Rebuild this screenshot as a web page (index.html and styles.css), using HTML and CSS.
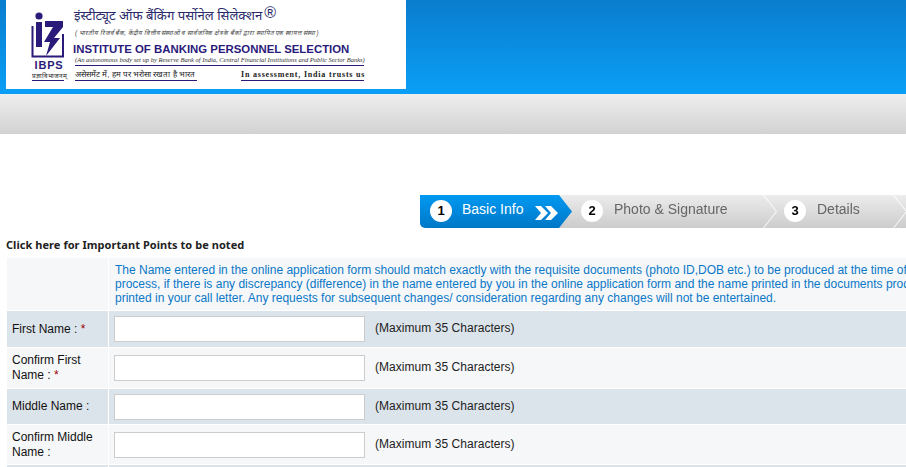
FILE: index.html
```html
<!doctype html>
<html lang="en">
<head>
    <meta charset="UTF-8">
    <meta name="viewport" content="width=device-width, initial-scale=1.0">
    <title>IBPS Application Form</title>
    <link rel="stylesheet" href="styles.css">
</head>
<body>
    <div class="header">
        <div class="logo">
            <svg class="emblem" viewBox="0 0 36 46" width="36" height="46">
                <circle cx="8" cy="4" r="3.6" fill="#2a1a7a"/>
                <path d="M5 10h6v25H5z" fill="#2a1a7a"/>
                <path d="M14 9h18v6L23 26h6L15 44l4-14h-6l9-15h-8z" fill="#2a1a7a"/>
                <path d="M1.500 14v30.500H32V22" fill="none" stroke="#2a1a7a" stroke-width="2"/>
            </svg>
            <div class="logo-text">
                <div class="hindi-title">इंस्टीट्यूट ऑफ बैंकिंग पर्सोनेल सिलेक्शन<sup>®</sup></div>
                <div class="hindi-sub">( भारतीय रिजर्व बैंक, केंद्रीय वित्तीय संस्थाओं व सार्वजनिक क्षेत्र के बैंकों द्वारा स्थापित एक स्वायत्त संस्था )</div>
                <div class="eng-title">INSTITUTE OF BANKING PERSONNEL SELECTION</div>
                <div class="eng-sub">(An autonomous body set up by Reserve Bank of India, Central Financial Institutions and Public Sector Banks)</div>
                <div class="mottos">
                    <span class="motto-hi">असेसमेंट में, हम पर भरोसा रखता है भारत</span>
                    <span class="motto-en">In assessment, India trusts us</span>
                </div>
            </div>
            <div class="ibps">IBPS</div>
            <div class="ibps-hi">प्रज्ञाविभाजनम्</div>
        </div>
    </div>
    <div class="band"></div>

    <ul class="steps">
        <li class="step step-active">
            <div class="step-inner">
                <span class="num">1</span>Basic Info
                <svg class="arrows" viewBox="0 0 23 14" width="23" height="14">
                    <path d="M0 0h6l7 7-7 7H0l6-7zM10 0h6l7 7-7 7h-6l6-7z" fill="#fff"/>
                </svg>
            </div>
        </li>
        <li class="step step-photo">
            <div class="step-inner"><span class="num">2</span>Photo &amp; Signature</div>
        </li>
        <li class="step step-details">
            <div class="step-inner"><span class="num">3</span>Details</div>
        </li>
        <li class="step step-last">
            <div class="step-inner"></div>
        </li>
    </ul>

    <div class="points">Click here for Important Points to be noted</div>

    <table class="form-table">
        <tr class="row-light">
            <td class="label"></td>
            <td class="note">The Name entered in the online application form should match exactly with the requisite documents (photo ID,DOB etc.) to be produced at the time of interview<br>process, if there is any discrepancy (difference) in the name entered by you in the online application form and the name printed in the documents produced<br>printed in your call letter. Any requests for subsequent changes/ consideration regarding any changes will not be entertained.</td>
        </tr>
        <tr class="row-dark row-first">
            <td class="label">First Name : <span class="req">*</span></td>
            <td class="field"><input type="text"><span class="hint">(Maximum 35 Characters)</span></td>
        </tr>
        <tr class="row-light row-confirm-first">
            <td class="label">Confirm First Name : <span class="req">*</span></td>
            <td class="field"><input type="text"><span class="hint">(Maximum 35 Characters)</span></td>
        </tr>
        <tr class="row-dark row-middle">
            <td class="label">Middle Name :</td>
            <td class="field"><input type="text"><span class="hint">(Maximum 35 Characters)</span></td>
        </tr>
        <tr class="row-light row-confirm">
            <td class="label">Confirm Middle Name :</td>
            <td class="field"><input type="text"><span class="hint">(Maximum 35 Characters)</span></td>
        </tr>
        <tr class="row-dark row-middle">
            <td class="label"></td>
            <td class="field"></td>
        </tr>
    </table>
</body>
</html>
```

FILE: styles.css
```css
html, body {
    margin: 0;
    padding: 0;
    height: 467px;
    overflow: hidden;
    background: #fff;
}
body {
    font-family: "Liberation Sans", Arial, sans-serif;
    font-size: 12px;
    width: 906px;
}
.header {
    height: 94px;
    background: linear-gradient(to bottom, #0a7dce, #0a9ff6);
}
.logo {
    position: relative;
    width: 400px;
    height: 89px;
    margin-left: 6px;
    background: #fff;
    display: flex;
    color: #2a1a7a;
}
.emblem {
    margin: 12px 0 0 25px;
    flex: none;
}
.ibps {
    position: absolute;
    left: 25px;
    top: 59px;
    width: 36px;
    text-align: center;
    font-size: 11px;
    line-height: 12px;
    font-weight: bold;
    letter-spacing: 0.8px;
}
.ibps-hi {
    position: absolute;
    left: 26px;
    top: 71px;
    width: 32px;
    font-size: 6.3px;
    line-height: 9px;
    text-align: center;
    white-space: nowrap;
    color: #222;
    border-bottom: 1px solid #2a1a7a;
}
.logo-text {
    margin-left: 6px;
    width: 291px;
    white-space: nowrap;
}
.hindi-title {
    margin: 7px 0 0 1px;
    height: 18px;
    font-size: 13.15px;
    line-height: 16px;
    font-family: "Noto Sans", "Liberation Sans", sans-serif;
    color: #2a2a6a;
}
.hindi-title sup {
    font-family: "Liberation Sans", sans-serif;
    font-size: 16px;
    line-height: 0;
    vertical-align: 2px;
    margin-left: 2px;
}
.hindi-sub {
    margin: 3px 0 0 2px;
    font-size: 6.3px;
    line-height: 10px;
    font-style: italic;
    color: #444;
}
.eng-title {
    margin-top: 4px;
    font-size: 11.4px;
    line-height: 14px;
    font-weight: bold;
    color: #2a1a7a;
}
.eng-sub {
    font-family: "Liberation Serif", serif;
    font-style: italic;
    font-size: 6.5px;
    line-height: 9px;
    margin: -1px 0 0 2px;
    padding-bottom: 1px;
    color: #333;
    border-bottom: 1px solid #2a1a7a;
}
.mottos {
    display: flex;
    justify-content: space-between;
    margin: 3px 0 0 2px;
}
.motto-hi {
    width: 122px;
    font-size: 8px;
    line-height: 11px;
    border-bottom: 1px solid #2a1a7a;
    color: #222;
}
.motto-en {
    width: 123px;
    font-family: "Liberation Serif", serif;
    font-weight: bold;
    font-size: 8px;
    line-height: 11px;
    letter-spacing: 0.8px;
    border-bottom: 1px solid #2a1a7a;
    color: #222;
}
.band {
    height: 40px;
    background: linear-gradient(to bottom, #eeeeee, #d2d2d2);
}
.steps {
    list-style: none;
    display: flex;
    margin: 61px 0 0 420px;
    padding: 0;
    height: 33px;
}
.step {
    flex: none;
    margin-left: -13px;
    filter: drop-shadow(1px 0 0 #fff);
}
.step-active {
    margin-left: 0;
    width: 152px;
    z-index: 4;
    filter: none;
}
.step-photo {
    width: 217px;
    z-index: 3;
}
.step-details {
    width: 143px;
    z-index: 2;
}
.step-last {
    width: 120px;
    z-index: 1;
}
.step-inner {
    box-sizing: border-box;
    height: 33px;
    display: flex;
    align-items: center;
    padding: 0 0 5px 22px;
    font-size: 14px;
    color: #666;
    background: linear-gradient(to bottom, #ececec, #cccccc);
    clip-path: polygon(0 0, calc(100% - 13px) 0, 100% 50%, calc(100% - 13px) 100%, 0 100%);
}
.step-details .step-inner {
    padding-left: 21px;
}
.step-active .step-inner {
    padding-left: 10px;
    color: #fff;
    background: linear-gradient(to bottom, #0099f2, #0077c6);
    border-radius: 0 0 0 5px;
}
.num {
    width: 22px;
    height: 22px;
    margin: 3px 11px 0 0;
    border-radius: 50%;
    background: #fff;
    color: #000;
    font-size: 13px;
    font-weight: bold;
    line-height: 22px;
    text-align: center;
}
.step-active .num {
    margin-right: 10px;
}
.arrows {
    flex: none;
    margin: 8px 0 0 12px;
}
.points {
    margin: 10px 0 0 6px;
    height: 19px;
    line-height: 13px;
    font-family: "Noto Sans", sans-serif;
    font-size: 11px;
    font-weight: bold;
    color: #222;
    letter-spacing: 0.05px;
}
.form-table {
    margin-left: 6px;
    border-collapse: separate;
    border-spacing: 1px;
    table-layout: fixed;
    width: 1100px;
}
.form-table td {
    padding: 0;
    vertical-align: middle;
}
.form-table .label {
    width: 91px;
    padding: 0 5px;
    color: #111;
    line-height: 15px;
}
.note {
    padding: 3px 0 4px 6px !important;
    color: #0a78c8;
    line-height: 14px;
    white-space: nowrap;
    height: 45px;
}
.row-light td {
    background: #f6f7f8;
}
.row-dark td {
    background: #dce4eb;
}
.row-first td {
    height: 36px;
}
.row-confirm-first td {
    height: 40px;
}
.row-confirm td {
    height: 39px;
}
.row-middle td {
    height: 35px;
}
.field {
    padding-left: 5px !important;
}
.field input {
    width: 251px;
    height: 26px;
    box-sizing: border-box;
    border: 1px solid #ccc;
    background: #fff;
    margin: 0;
    padding: 0;
    vertical-align: middle;
}
.hint {
    margin-left: 10px;
    color: #222;
    letter-spacing: 0.04px;
}
.req {
    color: #900;
}
```
